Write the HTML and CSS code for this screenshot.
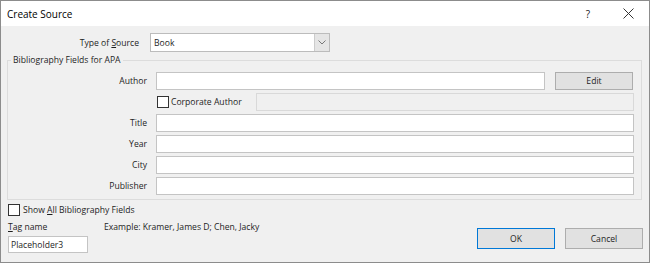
FILE: index.html
```html
<!DOCTYPE html>
<html lang="en">
<head>
  <meta charset="UTF-8">
  <title>Create Source</title>
  <link rel="stylesheet" href="styles.css">
</head>
<body>
  <div class="window">
    <div class="titlebar">
      <span class="title">Create Source</span>
      <span class="tb-btn help">?</span>
      <span class="tb-btn close">
        <svg width="11" height="11" viewBox="0 0 11 11"><path d="M0.5 0.5L10.5 10.5M10.5 0.5L0.5 10.5" stroke="#333" stroke-width="1" fill="none"/></svg>
      </span>
    </div>

    <div class="content">
      <div class="type-row">
        <label class="type-label">Type of <u>S</u>ource</label>
        <div class="select">
          <span class="select-value">Book</span>
          <span class="select-arrow">
            <svg width="8" height="5" viewBox="0 0 8 5"><path d="M0.5 0.5L4 4L7.5 0.5" stroke="#777" stroke-width="1" fill="none"/></svg>
          </span>
        </div>
      </div>

      <fieldset class="group">
        <legend>Bibliography Fields for APA</legend>
        <div class="fields">
          <label class="field-label">Author</label>
          <div class="author-row">
            <div class="input"></div>
            <button class="btn edit-btn">Edit</button>
          </div>

          <span></span>
          <div class="corp-row">
            <span class="checkbox"></span>
            <span class="corp-label">Corporate Author</span>
            <div class="input disabled"></div>
          </div>

          <label class="field-label">Title</label>
          <div class="input"></div>

          <label class="field-label">Year</label>
          <div class="input"></div>

          <label class="field-label">City</label>
          <div class="input"></div>

          <label class="field-label">Publisher</label>
          <div class="input"></div>
        </div>
      </fieldset>

      <div class="bottom">
        <div class="bottom-left">
          <div class="show-all">
            <span class="checkbox"></span>
            <span>Show <u>A</u>ll Bibliography Fields</span>
          </div>
          <div class="tag-row">
            <span class="tag-label"><u>T</u>ag name</span>
            <span class="example">Example: Kramer, James D; Chen, Jacky</span>
          </div>
          <div class="input tag-input">Placeholder3</div>
        </div>
        <div class="actions">
          <button class="btn ok-btn">OK</button>
          <button class="btn">Cancel</button>
        </div>
      </div>
    </div>
  </div>
</body>
</html>
```

FILE: styles.css
```css
body {
  margin: 0;
  font-family: "Open Sans", "Noto Sans", sans-serif;
  font-size: 8.6px;
  color: #1e1e1e;
}
.window {
  width: 650px;
  height: 263px;
  box-sizing: border-box;
  border: 1px solid #8c8c8c;
  background: #f0f0f0;
}
.titlebar {
  height: 25px;
  background: #fff;
  display: flex;
  align-items: center;
  padding-left: 6px;
}
.title {
  flex: 1;
  font-size: 10px;
  color: #000;
}
.tb-btn {
  width: 40px;
  display: flex;
  justify-content: center;
  align-items: center;
  font-size: 10px;
  color: #222;
}
.close { margin-right: 1px; }

.content {
  padding: 0 7px 0 6px;
}
.type-row {
  display: flex;
  align-items: center;
  height: 19px;
  margin-top: 7px;
}
.type-label {
  width: 132px;
  text-align: right;
  margin-right: 11px;
}
.select {
  width: 178px;
  height: 17px;
  border: 1px solid #bcbcbc;
  background: #fff;
  display: flex;
  align-items: center;
}
.select-value {
  flex: 1;
  padding-left: 3px;
}
.select-arrow {
  width: 14px;
  height: 17px;
  background: #e5e5e5;
  border-left: 1px solid #cccccc;
  display: flex;
  align-items: center;
  justify-content: center;
}

.group {
  margin: 2px 0 0 0;
  padding: 5px 7px 4px 0;
  border: 1px solid #dcdcdc;
}
.group legend {
  margin-left: 3px;
  padding: 0 2px;
  line-height: 13px;
}
.fields {
  display: grid;
  grid-template-columns: 139px 1fr;
  column-gap: 9px;
  grid-auto-rows: 18px;
  row-gap: 3px;
  align-items: center;
}
.field-label {
  text-align: right;
}
.input {
  height: 18px;
  box-sizing: border-box;
  border: 1px solid #c4c4c4;
  background: #fff;
  padding-left: 3px;
  line-height: 16px;
}
.input.disabled {
  flex: 1;
  background: #f0f0f0;
  border-color: #d9d9d9;
}
.author-row {
  display: flex;
  gap: 10px;
}
.author-row .input { flex: 1; }
.btn {
  font: inherit;
  color: #1e1e1e;
  background: #e1e1e1;
  border: 1px solid #adadad;
  padding: 0;
}
.edit-btn {
  width: 78px;
  height: 18px;
  margin-right: 1px;
}
.corp-row {
  display: flex;
  align-items: center;
}
.checkbox {
  width: 10px;
  height: 10px;
  border: 1px solid #333;
  background: #fff;
  flex: none;
}
.corp-row .checkbox { margin-left: 1px; }
.corp-label {
  margin-left: 2px;
  width: 85px;
}

.bottom {
  display: flex;
  justify-content: space-between;
  align-items: flex-end;
  margin-top: 3px;
}
.bottom-left {
  display: flex;
  flex-direction: column;
  padding-left: 1px;
}
.show-all {
  display: flex;
  align-items: center;
  gap: 3px;
  height: 14px;
}
.tag-row {
  display: flex;
  align-items: center;
  margin-top: 3px;
  height: 14px;
}
.tag-label { width: 96px; }
.tag-input {
  width: 80px;
  height: 17px;
  margin-top: 2px;
  padding-left: 2px;
}
.actions {
  display: flex;
  gap: 10px;
  margin: 0 -1px 4px 0;
}
.actions .btn {
  width: 78px;
  height: 21px;
}
.ok-btn {
  border-color: #0078d7;
}
```
